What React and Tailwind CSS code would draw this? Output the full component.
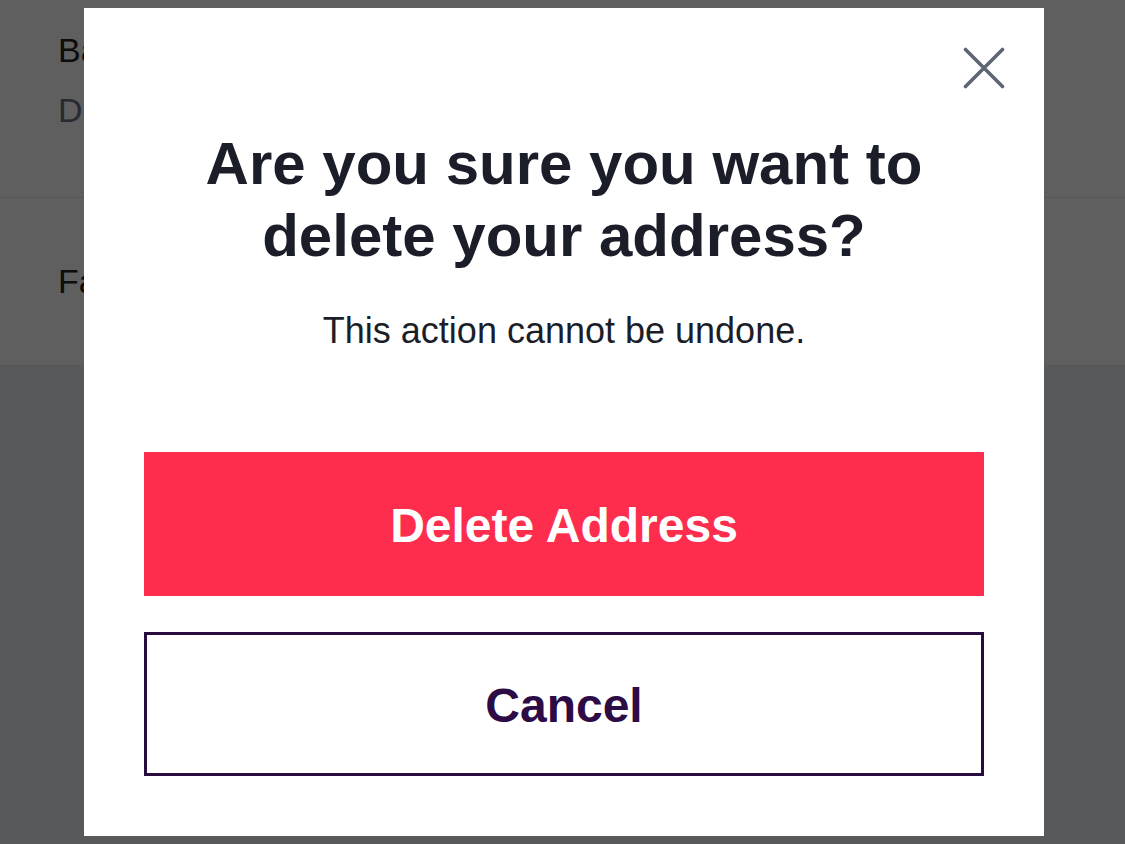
import React from 'react'

const CloseIcon = () => (
  <svg width="42" height="42" viewBox="0 0 42 42" fill="none">
    <path d="M2.5 2.5L39.5 39.5M39.5 2.5L2.5 39.5" stroke="#5f6672" strokeWidth="3.6" strokeLinecap="round" />
  </svg>
)

const App = () => {
  return (
    <div className="relative w-full h-[844px] overflow-hidden bg-[#eceff4]" style={{ fontFamily: '"Liberation Sans", Arial, sans-serif' }}>

      {/* page behind the dialog */}
      <div className="bg-white border-b border-[#e6e6e6] h-[198px] pl-[58px] pt-[20px] text-[34px] leading-[60px]">
        <p className="text-[#232323]">Basic Address</p>
        <p className="text-[#6b7280]">Default delivery address</p>
      </div>
      <div className="bg-white border-b border-[#e6e6e6] h-[168px] pl-[58px] flex items-center text-[34px] text-[#232323]">
        <p>Favourite places</p>
      </div>

      {/* overlay */}
      <div className="absolute inset-0 bg-black/[0.627] flex items-center justify-center pl-[3px]">
        <div className="relative bg-white w-[960px] h-[828px] flex flex-col items-center px-[60px] pt-[120px]">
          <button className="absolute top-[39px] right-[39px] w-[42px] h-[42px]">
            <CloseIcon />
          </button>

          <h1 className="text-[60px] leading-[72px] font-bold text-center text-[#1b1e29]">
            Are you sure you want to<br />delete your address?
          </h1>
          <p className="mt-[32px] text-[36px] leading-[54px] text-[#1b1e29]">This action cannot be undone.</p>

          <button className="mt-[94px] w-full h-[144px] pt-[4px] bg-[#ff2d4d] text-white text-[48px] font-bold">
            Delete Address
          </button>
          <button className="mt-[36px] w-full h-[144px] pt-[4px] border-[3px] border-[#290b3d] text-[#2d0c45] text-[48px] font-bold">
            Cancel
          </button>
        </div>
      </div>
    </div>
  )
}

export default App
